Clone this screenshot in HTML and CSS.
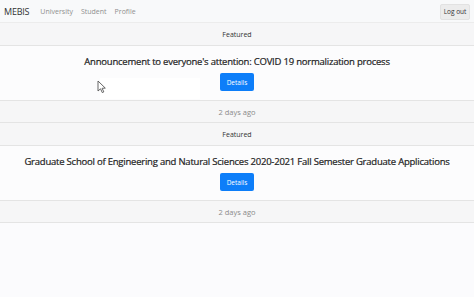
FILE: index.html
```html
<!DOCTYPE html>
<html>
<head>
<meta charset="utf-8">
<link rel="stylesheet" href="styles.css">
</head>
<body>
<nav class="navbar">
  <div class="nav-left">
    <span class="brand">MEBIS</span>
    <a class="nav-link">University</a>
    <a class="nav-link">Student</a>
    <a class="nav-link">Profile</a>
  </div>
  <button class="logout">Log out</button>
</nav>
<main class="content">
  <section class="card">
    <div class="card-header">Featured</div>
    <div class="card-body">
      <h5 class="card-title">Announcement to everyone's attention: COVID 19 normalization process</h5>
      <button class="btn">Details</button>
    </div>
    <div class="card-footer">2 days ago</div>
  </section>
  <section class="card">
    <div class="card-header">Featured</div>
    <div class="card-body">
      <h5 class="card-title">Graduate School of Engineering and Natural Sciences 2020-2021 Fall Semester Graduate Applications</h5>
      <button class="btn">Details</button>
    </div>
    <div class="card-footer">2 days ago</div>
  </section>
</main>
<div class="cursor-patch"></div>
<svg class="cursor" width="10" height="14" viewBox="0 0 10 14"><path d="M1 1 L1 11 L3.5 8.8 L5.3 12.6 L6.8 11.9 L5.1 8.3 L8.3 8.1 Z" fill="#fff" stroke="#555" stroke-width="0.9" stroke-linejoin="round"/></svg>
</body>
</html>
```

FILE: styles.css
```css
html, body {
  margin: 0;
  padding: 0;
}
body {
  font-family: "Open Sans", "Noto Sans", sans-serif;
  background: #fbfbfd;
  color: #212529;
  width: 474px;
  height: 297px;
  overflow: hidden;
  position: relative;
}
.navbar {
  height: 23px;
  box-sizing: border-box;
  display: flex;
  align-items: center;
  justify-content: space-between;
  padding: 0 4px 0 4px;
  background: #f8f9fa;
  border-bottom: 1px solid #ececec;
}
.nav-left {
  display: flex;
  align-items: center;
  gap: 8px;
}
.brand {
  font-size: 9px;
  letter-spacing: -0.2px;
  color: #333;
  margin-right: 3px;
}
.nav-link {
  font-size: 7px;
  color: #8f8f8f;
}
.logout {
  font-family: inherit;
  font-size: 6.5px;
  color: #333;
  background: #ececec;
  border: 1px solid #e2e2e2;
  border-radius: 2px;
  height: 16px;
  width: 30px;
  padding: 0;
  margin-top: 1px;
}
.content {
  display: flex;
  flex-direction: column;
}
.card {
  display: flex;
  flex-direction: column;
}
.card-header, .card-footer {
  height: 23px;
  box-sizing: border-box;
  display: flex;
  align-items: center;
  justify-content: center;
  font-size: 7px;
  background: #f6f6f7;
  border-bottom: 1px solid #e4e4e4;
}
.card-header {
  color: #333;
}
.card-footer {
  color: #8a8a8a;
  font-size: 7.5px;
  border-top: 1px solid #e4e4e4;
  border-bottom: 1px solid #e4e4e4;
}
.card-body {
  background: #fcfcfd;
  height: 54px;
  box-sizing: border-box;
  display: flex;
  flex-direction: column;
  align-items: center;
  padding-top: 9px;
}
.card-title {
  margin: 0;
  font-size: 9.5px;
  letter-spacing: -0.22px;
  font-weight: 500;
  color: #222;
  line-height: 14px;
  white-space: nowrap;
  -webkit-text-stroke: 0.2px #222;
}
.btn {
  margin-top: 4px;
  font-family: inherit;
  font-size: 6.5px;
  color: #fff;
  background: #0d7ef9;
  border: none;
  border-radius: 2px;
  width: 34px;
  height: 18px;
  padding: 0;
}
.cursor-patch {
  position: absolute;
  left: 100px;
  top: 78px;
  width: 100px;
  height: 21px;
  background: #fff;
}
.cursor {
  position: absolute;
  left: 97px;
  top: 80px;
}
```
